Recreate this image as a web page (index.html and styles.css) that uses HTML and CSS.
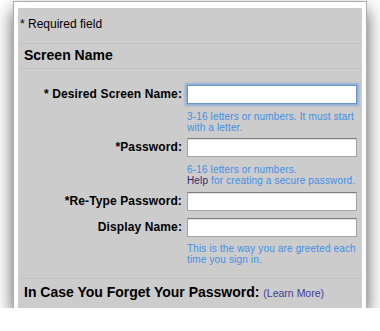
FILE: index.html
```html
<!DOCTYPE html>
<html>
<head>
<meta charset="utf-8">
<link rel="stylesheet" href="styles.css">
</head>
<body>
<div class="window">
  <div class="panel">
    <p class="req">* Required field</p>
    <h2 class="section">Screen Name</h2>
    <div class="form">
      <div class="row r1">
        <label class="label">* Desired Screen Name:</label>
        <div class="col">
          <input class="field focus" type="text">
          <p class="hint">3-16 letters or numbers. It must start<br>with a letter.</p>
        </div>
      </div>
      <div class="row r2">
        <label class="label">*Password:</label>
        <div class="col">
          <input class="field" type="password">
          <p class="hint">6-16 letters or numbers.<br><a class="help">Help</a> for creating a secure password.</p>
        </div>
      </div>
      <div class="row r3">
        <label class="label">*Re-Type Password:</label>
        <div class="col">
          <input class="field" type="password">
        </div>
      </div>
      <div class="row r4">
        <label class="label">Display Name:</label>
        <div class="col">
          <input class="field" type="text">
          <p class="hint h3">This is the way you are greeted each<br>time you sign in.</p>
        </div>
      </div>
    </div>
    <h2 class="section last">In Case You Forget Your Password: <a class="more">(Learn More)</a></h2>
  </div>
</div>
</body>
</html>
```

FILE: styles.css
```css
html, body {
  margin: 0;
  padding: 0;
  background: #ffffff;
}
body {
  font-family: "Liberation Sans", Arial, sans-serif;
  color: #000;
}
.window {
  margin: 1px 0 0 13px;
  border: 1px solid #ababab;
  border-bottom: none;
  background: #fff;
  padding: 6px 4px 0 4px;
  box-sizing: border-box;
  width: 354px;
  box-shadow: 0 9px 17px rgba(0, 0, 0, 0.65);
}
.panel {
  background: #cccccc;
}
.req {
  margin: 0;
  padding: 8px 0 11px 2px;
  font-size: 12px;
  line-height: 16px;
}
.section {
  margin: 0;
  padding: 2px 0 4px 6px;
  font-size: 14px;
  line-height: 18px;
  font-weight: bold;
  border-top: 1px solid #c3c3c3;
  border-bottom: 1px solid #c3c3c3;
}
.section.last {
  border-bottom: none;
  padding: 4px 0 6px 6px;
}
.more {
  font-weight: normal;
  font-size: 10.5px;
  color: #3f3a9a;
}
.form {
  padding: 16px 0 13px 0;
}
.row {
  display: flex;
  column-gap: 5px;
}
.r2 { margin-top: 5px; }
.r3 { margin-top: 6px; }
.r4 { margin-top: 7px; }
.label {
  width: 164px;
  text-align: right;
  font-size: 12px;
  font-weight: bold;
  letter-spacing: 0.12px;
  line-height: 19px;
  height: 19px;
}
.col {
  width: 170px;
}
.field {
  display: block;
  box-sizing: border-box;
  width: 170px;
  height: 19px;
  margin: 0;
  padding: 0 3px;
  background: #fff;
  border: 1px solid #a6a6a6;
  border-top-color: #7c7c7c;
  box-shadow: inset 0 1px 1px rgba(0, 0, 0, 0.12);
  outline: none;
  font-size: 11px;
}
.field.focus {
  border-color: #6a93c6;
  box-shadow: 0 0 0 1px #8db1dc, 0 0 2px 2px rgba(105, 150, 210, 0.55);
}
.hint {
  margin: 7px 0 0 0;
  font-size: 10px;
  line-height: 11px;
  letter-spacing: 0.15px;
  color: #3f8fe6;
}
.hint.h3 {
  margin-top: 6px;
}
.help {
  color: #2f2a6e;
}
```
